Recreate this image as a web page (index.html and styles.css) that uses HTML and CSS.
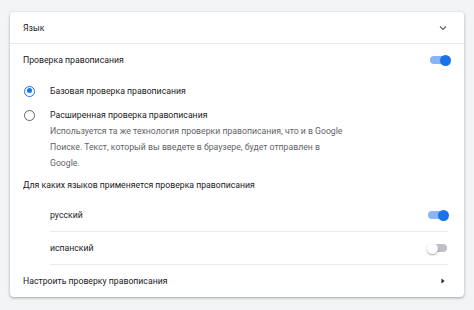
FILE: index.html
```html
<!DOCTYPE html>
<html lang="ru">
<head>
<meta charset="utf-8">
<link rel="stylesheet" href="styles.css">
</head>
<body>
<div class="card">
  <div class="row header">
    <span class="label">Язык</span>
    <svg class="chev" width="8" height="6" viewBox="0 0 8 6"><path d="M1 1.5 L4 4.5 L7 1.5" fill="none" stroke="#5f6368" stroke-width="1.2"/></svg>
  </div>
  <div class="row main">
    <span class="label">Проверка правописания</span>
    <span class="toggle on"><span class="knob"></span></span>
  </div>
  <div class="radio-row basic">
    <span class="radio checked"></span>
    <span class="label">Базовая проверка правописания</span>
  </div>
  <div class="radio-row enhanced">
    <span class="radio"></span>
    <div class="text">
      <div class="label">Расширенная проверка правописания</div>
      <div class="sub">Используется та же технология проверки правописания, что и в Google<br>Поиске. Текст, который вы введете в браузере, будет отправлен в<br>Google.</div>
    </div>
  </div>
  <div class="row langs-title">
    <span class="label">Для каких языков применяется проверка правописания</span>
  </div>
  <div class="row lang">
    <span class="label">русский</span>
    <span class="toggle on"><span class="knob"></span></span>
  </div>
  <div class="row lang">
    <span class="label">испанский</span>
    <span class="toggle off"><span class="knob"></span></span>
  </div>
  <div class="row custom">
    <span class="label">Настроить проверку правописания</span>
    <svg class="arrow" width="4" height="6" viewBox="0 0 4 6"><path d="M0.5 0.5 L3.5 3 L0.5 5.5 Z" fill="#202124"/></svg>
  </div>
</div>
</body>
</html>
```

FILE: styles.css
```css
* { box-sizing: border-box; }
html, body { margin: 0; }
body {
  background: #f3f4f6;
  padding: 12px 10px 13px 10px;
  font-family: Roboto, "Noto Sans", sans-serif;
  font-size: 8.7px;
  color: #202124;
}
.card {
  width: 454px;
  background: #fff;
  border-radius: 4px;
  box-shadow: 0 1px 2px rgba(60,64,67,0.3), 0 1px 3px 1px rgba(60,64,67,0.12);
}
.row {
  display: flex;
  align-items: center;
  justify-content: space-between;
  padding: 0 14px 0 13px;
}
.header {
  height: 32px;
  border-bottom: 1px solid #e8eaed;
  padding-right: 17px;
}
.main { height: 32px; }
.radio-row {
  display: flex;
  padding-left: 14px;
  padding-right: 20px;
}
.basic { height: 30px; align-items: center; }
.enhanced { padding-top: 1px; height: 65px; align-items: flex-start; }
.enhanced .radio { margin-top: 2.5px; }
.radio {
  flex: none;
  width: 11px;
  height: 11px;
  border-radius: 50%;
  border: 1.5px solid #5f6368;
  margin-right: 15px;
  position: relative;
}
.radio.checked { border-color: #1a73e8; }
.radio.checked::after {
  content: "";
  position: absolute;
  left: 1.5px; top: 1.5px;
  width: 5px; height: 5px;
  border-radius: 50%;
  background: #1a73e8;
}
.text .label { line-height: 16px; }
.sub { color: #5f6368; line-height: 16px; }
.langs-title { height: 28px; }
.lang {
  height: 33px;
  margin-left: 40px;
  margin-right: 16px;
  padding: 0;
  border-bottom: 1px solid #e8eaed;
}
.custom { height: 32px; padding-right: 19px; }
.toggle {
  position: relative;
  width: 20px;
  height: 8px;
  border-radius: 4px;
  flex: none;
}
.toggle.on { background: #8ab4f8; }
.toggle.off { background: #bdc1c6; width: 18px; margin-right: 1px; }
.toggle .knob {
  position: absolute;
  top: -1.5px;
  width: 11px;
  height: 11px;
  border-radius: 50%;
}
.toggle.on .knob { right: -1px; background: #1a73e8; }
.toggle.off .knob { left: -2px; background: #fff; box-shadow: 0 1px 2px rgba(0,0,0,0.35); }
```
